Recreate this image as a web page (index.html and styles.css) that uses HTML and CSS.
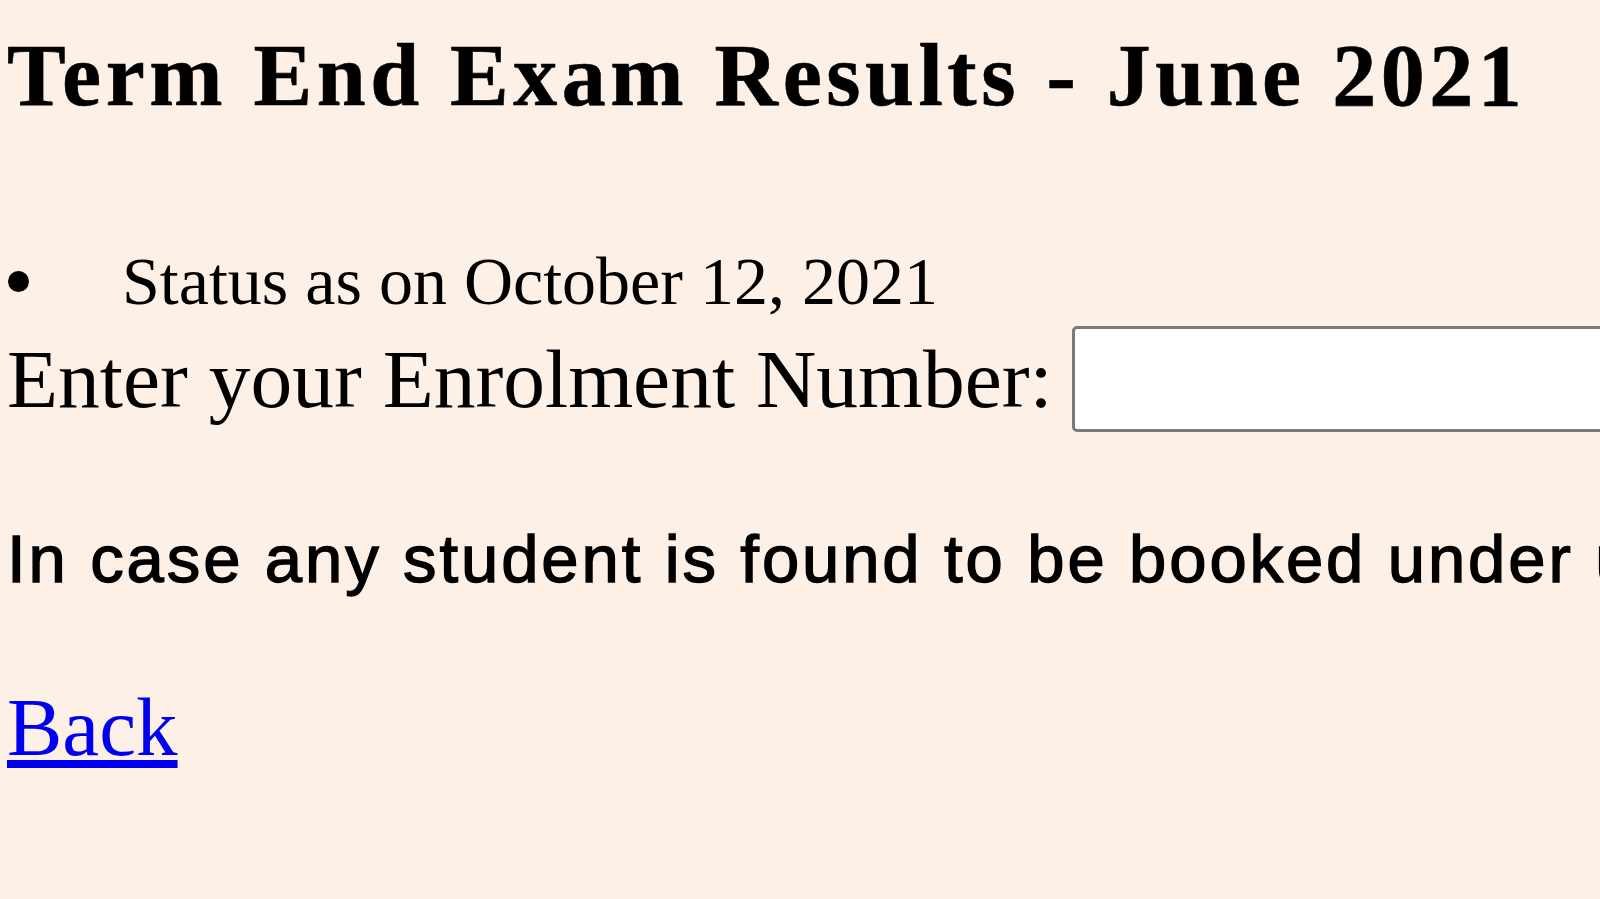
FILE: index.html
```html
<!DOCTYPE html>
<html>
<head>
<meta charset="utf-8">
<title>Term End Exam Results - June 2021</title>
<link rel="stylesheet" href="styles.css">
</head>
<body>
<div class="page">
  <h1 class="title">Term End Exam Results - June 2021</h1>
  <ul class="status-list">
    <li class="status-item">Status as on October 12, 2021</li>
  </ul>
  <form class="enrol-form">
    <label class="enrol-label" for="enrol">Enter your Enrolment Number:</label>
    <input class="enrol-input" id="enrol" type="text">
  </form>
  <p class="notice">In case any student is found to be booked under unfair means, the result shall be withheld.</p>
  <a class="back-link" href="#">Back</a>
</div>
</body>
</html>
```
FILE: styles.css
```css
html, body {
  margin: 0;
  padding: 0;
  background: #fdf0e7;
  overflow: hidden;
}

.page {
  padding-left: 7px;
  white-space: nowrap;
  color: #000;
  font-family: "Liberation Serif", "Times New Roman", serif;
}

.title {
  margin: 27px 0 0 0;
  font-size: 88px;
  line-height: 97px;
  font-weight: bold;
  letter-spacing: 4.5px;
  -webkit-text-stroke: 0.6px #000;
}

.status-list {
  list-style: none;
  margin: 119px 0 0 0;
  padding: 0;
}

.status-item {
  display: flex;
  align-items: center;
  font-size: 68px;
  line-height: 76px;
}

.status-item::before {
  content: "";
  width: 21px;
  height: 21px;
  border-radius: 50%;
  background: #000;
  margin: 0 93px 0 1px;
  flex: none;
}

.enrol-form {
  display: flex;
  align-items: center;
  margin-top: 7px;
}

.enrol-label {
  font-size: 83.5px;
  line-height: 92px;
}

.enrol-input {
  flex: none;
  width: 700px;
  height: 106px;
  box-sizing: border-box;
  margin: 0 0 0 19px;
  border: 3px solid #7a7a7a;
  border-radius: 5px;
  background: #fff;
  padding: 0;
}

.notice {
  margin: 89px 0 0 0;
  font-family: "Liberation Sans", Arial, sans-serif;
  font-size: 67px;
  line-height: 75px;
  letter-spacing: 2.9px;
  -webkit-text-stroke: 1.4px #000;
}

.back-link {
  display: block;
  width: fit-content;
  margin-top: 85px;
  font-size: 83px;
  line-height: 92px;
  color: #0000ee;
  text-decoration: underline;
}
```
